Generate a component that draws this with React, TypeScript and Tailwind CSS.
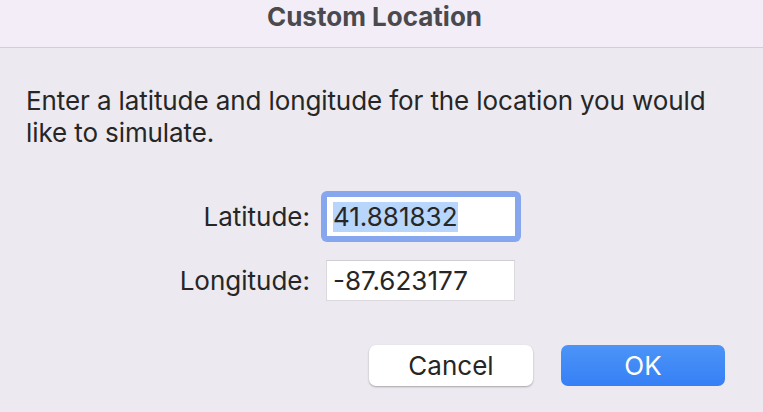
export default function App() {
  return (
    <div
      className="w-[763px] h-[412px] flex flex-col bg-[#ece9f0] text-[#262626] overflow-hidden"
      style={{ fontFamily: "Inter, 'Noto Sans', sans-serif" }}
    >
      {/* Title bar */}
      <div className="h-[48px] shrink-0 flex items-center justify-center pr-[14px] bg-[#f2edf6] border-b border-[#d3cfd6]">
        <span className="text-[26px] font-bold text-[#4a494d] -mt-[14px]">Custom Location</span>
      </div>

      {/* Body */}
      <div className="flex flex-col px-[26px] pt-[37px]">
        <p className="text-[26px] leading-[32px] tracking-[-0.1px]">
          Enter a latitude and longitude for the location you would like to simulate.
        </p>

        <div className="grid grid-cols-[295px_200px] items-center gap-y-[18px] mt-[42px] text-[26px]">
          <span className="text-right pr-[11px]">Latitude:</span>
          <div className="w-[200px] h-[51px] rounded-[6px] bg-[#86a6ee] p-[6px]">
            <div className="h-full bg-white flex items-center pl-[6px]">
              <span className="bg-[#b8d5fb] leading-[30px]">41.881832</span>
            </div>
          </div>

          <span className="text-right pr-[11px]">Longitude:</span>
          <div className="w-[189px] h-[41px] bg-white border border-[#dcd9de] border-t-[#cfccd2] flex items-center pl-[6px] ml-[5px]">
            -87.623177
          </div>
        </div>

        <div className="flex justify-end gap-[28px] mt-[44px] pr-[12px] text-[26px]">
          <button className="w-[164px] h-[41px] rounded-[7px] bg-white shadow-[0_1px_2px_rgba(0,0,0,0.3)] text-[#262626]">
            Cancel
          </button>
          <button className="w-[164px] h-[41px] rounded-[7px] bg-gradient-to-b from-[#4c94f7] to-[#3580f6] text-white">
            OK
          </button>
        </div>
      </div>
    </div>
  );
}
